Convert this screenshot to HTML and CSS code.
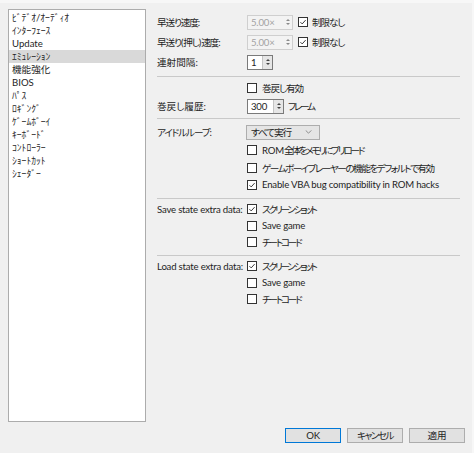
FILE: index.html
```html
<!DOCTYPE html>
<html lang="ja">
<head>
<meta charset="utf-8">
<title>設定</title>
<link rel="stylesheet" href="styles.css">
</head>
<body>
<div class="dialog">
  <div class="main">
    <ul class="nav">
      <li>ﾋﾞﾃﾞｵ/ｵｰﾃﾞｨｵ</li>
      <li>ｲﾝﾀｰﾌｪｰｽ</li>
      <li>Update</li>
      <li class="sel">ｴﾐｭﾚｰｼｮﾝ</li>
      <li><span class="kj">機能強化</span></li>
      <li>BIOS</li>
      <li>ﾊﾟｽ</li>
      <li>ﾛｷﾞﾝｸﾞ</li>
      <li>ｹﾞｰﾑﾎﾞｰｲ</li>
      <li>ｷｰﾎﾞｰﾄﾞ</li>
      <li>ｺﾝﾄﾛｰﾗｰ</li>
      <li>ｼｮｰﾄｶｯﾄ</li>
      <li>ｼｪｰﾀﾞｰ</li>
    </ul>
    <div class="settings">
      <div class="row h20">
        <span class="label"><span class="ja-soft">早送り速度</span>:</span>
        <div class="spin disabled spin-speed"><span class="val">5.00×</span><span class="arrows"><i class="up"></i><i class="dn"></i></span></div>
        <span class="check after-spin"><span class="box"><svg viewBox="0 0 10 10"><path d="M1.8 5.2 L4 7.4 L8.3 2.6"/></svg></span><span class="ja-soft">制限なし</span></span>
      </div>
      <div class="row h20">
        <span class="label"><span class="ja-soft">早送り</span>(<span class="ja-soft">押し</span>)<span class="ja-soft">速度</span>:</span>
        <div class="spin disabled spin-speed"><span class="val">5.00×</span><span class="arrows"><i class="up"></i><i class="dn"></i></span></div>
        <span class="check after-spin"><span class="box"><svg viewBox="0 0 10 10"><path d="M1.8 5.2 L4 7.4 L8.3 2.6"/></svg></span><span class="ja-soft">制限なし</span></span>
      </div>
      <div class="row h20">
        <span class="label"><span class="kj">連射間隔</span>:</span>
        <div class="spin spin-small"><span class="val">1</span><span class="arrows"><i class="up"></i><i class="dn"></i></span></div>
      </div>
      <hr class="sep sep-a">
      <div class="row h18">
        <span class="label"></span>
        <span class="check"><span class="box"></span><span class="ja-soft">巻戻し有効</span></span>
      </div>
      <div class="row h18">
        <span class="label"><span class="kj">巻戻し履歴</span>:</span>
        <div class="spin spin-mid"><span class="val">300</span><span class="arrows"><i class="up"></i><i class="dn"></i></span></div>
        <span class="unit kana">フレーム</span>
      </div>
      <hr class="sep sep-b">
      <div class="row h18">
        <span class="label"><span class="ja-soft">アイドルループ</span>:</span>
        <div class="combo"><span class="ja-soft">すべて実行</span><svg class="chev" viewBox="0 0 8 5"><path d="M0.5 0.5 L4 4 L7.5 0.5"/></svg></div>
      </div>
      <div class="row h18">
        <span class="label"></span>
        <span class="check"><span class="box"></span>ROM<span class="kana">全体をメモリにプリロード</span></span>
      </div>
      <div class="row h17">
        <span class="label"></span>
        <span class="check"><span class="box"></span><span class="ja">ゲームボーイプレーヤーの機能をデフォルトで有効</span></span>
      </div>
      <div class="row h17">
        <span class="label"></span>
        <span class="check"><span class="box"><svg viewBox="0 0 10 10"><path d="M1.8 5.2 L4 7.4 L8.3 2.6"/></svg></span>Enable VBA bug compatibility in ROM hacks</span>
      </div>
      <hr class="sep sep-c">
      <div class="row h16">
        <span class="label">Save state extra data:</span>
        <span class="check"><span class="box"><svg viewBox="0 0 10 10"><path d="M1.8 5.2 L4 7.4 L8.3 2.6"/></svg></span><span class="kana">スクリーンショット</span></span>
      </div>
      <div class="row h17">
        <span class="label"></span>
        <span class="check"><span class="box"></span>Save game</span>
      </div>
      <div class="row h16">
        <span class="label"></span>
        <span class="check"><span class="box"></span><span class="kana">チートコード</span></span>
      </div>
      <hr class="sep sep-c">
      <div class="row h16">
        <span class="label">Load state extra data:</span>
        <span class="check"><span class="box"><svg viewBox="0 0 10 10"><path d="M1.8 5.2 L4 7.4 L8.3 2.6"/></svg></span><span class="kana">スクリーンショット</span></span>
      </div>
      <div class="row h17">
        <span class="label"></span>
        <span class="check"><span class="box"></span>Save game</span>
      </div>
      <div class="row h16">
        <span class="label"></span>
        <span class="check"><span class="box"></span><span class="kana">チートコード</span></span>
      </div>
    </div>
  </div>
  <div class="buttons">
    <button class="btn default">OK</button>
    <button class="btn"><span class="ja">キャンセル</span></button>
    <button class="btn"><span class="kj">適用</span></button>
  </div>
</div>
</body>
</html>
```

FILE: styles.css
```css
html, body {
  margin: 0;
  padding: 0;
  background: #f0f0f0;
}

body {
  font-family: "Lato", "Noto Sans CJK JP", sans-serif;
  font-size: 9.6px;
  letter-spacing: -0.2px;
  color: #1e1e1e;
  font-feature-settings: "palt";
}

/* Japanese runs: the reference UI font has narrow kana */
.ja { letter-spacing: -1.5px; }
.ja-soft { letter-spacing: -1.1px; }
.kana { letter-spacing: -2.2px; }
.kj { letter-spacing: 0; }

.dialog {
  width: 474px;
  height: 453px;
  box-sizing: border-box;
  border-top: 3px solid #f7f7f7;
  border-right: 2px solid #f7f7f7;
  display: flex;
  flex-direction: column;
}

.main {
  display: flex;
  padding: 6px 0 0 8px;
}

.nav {
  list-style: none;
  margin: 0;
  padding: 1px 0 0 0;
  width: 138px;
  height: 413px;
  box-sizing: border-box;
  border: 1px solid #acacac;
  background: #fff;
}

.nav li {
  height: 13px;
  line-height: 13px;
  padding-left: 3px;
  white-space: nowrap;
  font-feature-settings: normal;
  letter-spacing: 0;
}

.nav li.sel {
  background: #d9d9d9;
}

.settings {
  margin-left: 11px;
  margin-top: 3px;
  width: 303px;
  display: flex;
  flex-direction: column;
}

.row {
  display: flex;
  align-items: center;
  white-space: nowrap;
}

.h16 { height: 16px; }
.h17 { height: 17px; }
.h18 { height: 18px; }
.h20 { height: 20px; }

.label {
  width: 90px;
  flex-shrink: 0;
}

.sep {
  margin: 0;
  border: 0;
  height: 1px;
  background: #c9c9c9;
}
.sep-a { margin: 4px 0 2px; }
.sep-b { margin: 3px 0 4px; }
.sep-c { margin: 5px 0 2px; }

/* spin box */
.spin {
  display: flex;
  align-items: stretch;
  height: 15px;
  box-sizing: border-box;
  border: 1px solid #7a7a7a;
  background: #fff;
}
.spin .val {
  flex: 1;
  padding-left: 3px;
  line-height: 13px;
}
.spin .arrows {
  width: 9px;
  display: flex;
  flex-direction: column;
  align-items: center;
  justify-content: center;
  gap: 2px;
  background: #e6e6e6;
  border-left: 1px solid #c4c4c4;
}
.spin .arrows i {
  display: block;
  width: 0;
  height: 0;
  border-left: 2px solid transparent;
  border-right: 2px solid transparent;
}
.spin .arrows .up { border-bottom: 2px solid #444; }
.spin .arrows .dn { border-top: 2px solid #444; }

.spin.disabled {
  border-color: #cfcfcf;
  background: #f3f3f3;
  color: #a3a3a3;
}
.spin.disabled .arrows {
  background: transparent;
  border-left: 0;
}
.spin.disabled .arrows .up { border-bottom-color: #8a8a8a; }
.spin.disabled .arrows .dn { border-top-color: #8a8a8a; }

.spin-speed { width: 46px; }
.spin-small { width: 26px; }
.spin-mid { width: 37px; }

.unit { margin-left: 4px; }

/* checkbox */
.check {
  display: flex;
  align-items: center;
}
.check .box {
  width: 10px;
  height: 10px;
  box-sizing: border-box;
  border: 1px solid #333;
  background: #fff;
  margin-right: 5px;
  display: flex;
  flex-shrink: 0;
}
.check .box svg {
  width: 8px;
  height: 8px;
}
.check .box path {
  fill: none;
  stroke: #222;
  stroke-width: 1.1;
}
.after-spin { margin-left: 5px; }
.after-spin .box { margin-right: 4px; }

/* combo */
.combo {
  width: 74px;
  height: 15px;
  box-sizing: border-box;
  border: 1px solid #adadad;
  background: #e5e5e5;
  display: flex;
  align-items: center;
  justify-content: space-between;
  padding: 0 7px 0 4px;
  margin-left: -1px;
}
.combo .chev {
  width: 7px;
  height: 4px;
}
.combo .chev path {
  fill: none;
  stroke: #777;
  stroke-width: 1;
}

/* buttons */
.buttons {
  display: flex;
  justify-content: flex-end;
  gap: 6px;
  margin-top: 6px;
  padding-right: 7px;
}
.btn {
  width: 56px;
  height: 15px;
  padding: 0;
  box-sizing: border-box;
  border: 1px solid #adadad;
  background: #e1e1e1;
  font: inherit;
  letter-spacing: inherit;
  color: #1e1e1e;
  line-height: 13px;
}
.btn.default {
  border-color: #0078d7;
}
```
